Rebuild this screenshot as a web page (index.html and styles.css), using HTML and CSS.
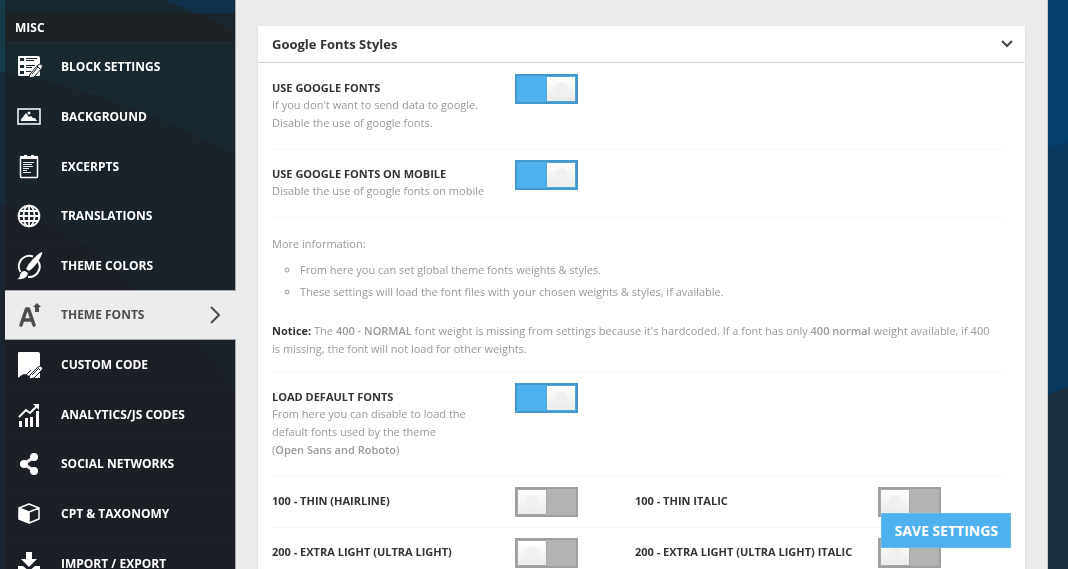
FILE: index.html
```html
<!DOCTYPE html>
<html lang="en">
<head>
  <meta charset="UTF-8">
  <meta name="viewport" content="width=device-width, initial-scale=1.0">
  <title>Theme Fonts</title>
  <link rel="stylesheet" href="styles.css">
</head>
<body>
  <svg class="backdrop" viewBox="0 0 1068 569" preserveAspectRatio="none" aria-hidden="true">
    <rect width="1068" height="569" fill="#005088"/>
    <path d="M0 0H163C190 10 215 20 240 34V569H0Z" fill="#163a48"/>
    <path d="M0 72C70 82 150 112 240 157V569H0Z" fill="#172b3b"/>
    <path d="M0 205C45 220 80 240 112 267L165 312C190 330 215 360 240 400V569H0Z" fill="#1c2530"/>
    <path d="M1040 0H1068V569H1040Z" fill="#03406c"/>
    <path d="M1040 149L1068 142V569H1040Z" fill="#083a61"/>
    <path d="M1040 398L1068 387V569H1040Z" fill="#1b2f3e"/>
  </svg>

  <div class="wrapper">
    <aside class="sidebar">
      <h2 class="menu-title">Misc</h2>
      <nav class="menu">
        <a href="#" class="menu-item">
          <svg class="icon" viewBox="0 0 24 24"><path fill="currentColor" fill-rule="evenodd" d="M2 1h19q2 0 2 2v17q0 1-1 1H2q-1 0-1-1V2q0-1 1-1zM3 3v3h4V3zM9 3v1h11V3zM9 5v1h8V5zM3 10v3h4v-3zM9 10v1h9v-1zM9 12v1h6v-1zM3 16v3h4v-3zM9 16v1h5v-1z"/><path class="pencil" d="M12 23l1-4 8-9q2-2 4 0 1 1 0 3l-8 9z"/><path class="pencil-line" d="M15 19l6-7M20 11l3 3"/></svg>
          <span>Block Settings</span>
        </a>
        <a href="#" class="menu-item">
          <svg class="icon" viewBox="0 0 24 24"><path d="M1 4h22v15H1z" fill="none" stroke="currentColor" stroke-width="1.500"/><path d="M4 16v-2l2-2 3-4 3 4 2-1 2 2h2l2 3zM12 6.500a1.500 1.500 0 1 1 0 3 1.500 1.500 0 0 1 0-3z" fill="currentColor"/></svg>
          <span>Background</span>
        </a>
        <a href="#" class="menu-item">
          <svg class="icon" viewBox="0 0 24 24"><rect x="3.500" y="2" width="17" height="20.500" rx="1" fill="none" stroke="currentColor" stroke-width="1.500"/><path d="M3 1h18v3H3zM7 0h3v2H7zM14 0h3v2h-3z" fill="currentColor"/><path d="M6 7.500h11M6 9.500h9M6 11.500h10M6 13.500h6M6 15.500h4M6 17.500h8" stroke="currentColor" stroke-width=".9"/></svg>
          <span>Excerpts</span>
        </a>
        <a href="#" class="menu-item">
          <svg class="icon" viewBox="0 0 24 24"><g fill="none" stroke="currentColor" stroke-width="1.800"><circle cx="12" cy="12" r="10.400"/><ellipse cx="12" cy="12" rx="5.500" ry="10.400"/><path d="M12 1.500v21M1.500 12h21M3.500 7h17M3.500 17h17"/></g></svg>
          <span>Translations</span>
        </a>
        <a href="#" class="menu-item">
          <svg class="icon tall" viewBox="0 0 24 28"><path d="M16 4.500A10.500 10.500 0 0 0 3.500 20M21 9A10.500 10.500 0 0 1 11 25" fill="none" stroke="currentColor" stroke-width="2"/><path d="M25 0q1 1-3 8-4 7-10 11l-3-2q2-5 7-10 6-6 9-7zM8 19l3 2q-1 7-11 6 3-1 3-4 1-4 5-4z" fill="currentColor"/></svg>
          <span>Theme Colors</span>
        </a>
        <a href="#" class="menu-item active">
          <svg class="icon" viewBox="0 0 24 24"><path d="M4 22L9.500 6h2L17 22M6 17h9" fill="none" stroke="currentColor" stroke-width="3.500" stroke-linecap="round" stroke-linejoin="round"/><path d="M20 0l4 4h-2v5h-4V4h-2z" fill="currentColor"/></svg>
          <span>Theme Fonts</span>
          <svg class="arrow" viewBox="0 0 10 18"><path d="M1 1l8 8-8 8" fill="none" stroke="currentColor" stroke-width="2"/></svg>
        </a>
        <a href="#" class="menu-item">
          <svg class="icon tall" viewBox="0 0 24 28"><path d="M2 1h19q2 0 2 2v24h-6l-7-3-3-1q-3 1-6 4V2q0-1 1-1z" fill="currentColor"/><path class="pencil-line" d="M9 24q-3-1-5 2M9 24l5-5"/><path class="pencil" d="M12 28l1-4 8-8q2-2 4 0 1 1 0 3l-8 8z"/><path class="pencil-line" d="M15 24l6-6M20 16l3 3"/></svg>
          <span>Custom Code</span>
        </a>
        <a href="#" class="menu-item">
          <svg class="icon" viewBox="0 0 24 24"><path d="M2 18h3v6H2zM8 15h3v9H8zM13 14h3v10h-3zM19 8h3v16h-3zM16 1h6v6l-2-2z" fill="currentColor"/><path d="M2 14l7-7 4 3 7-7" fill="none" stroke="currentColor" stroke-width="2"/></svg>
          <span>Analytics/JS Codes</span>
        </a>
        <a href="#" class="menu-item">
          <svg class="icon" viewBox="0 0 24 24"><path d="M17 5L7 12l10 7" fill="none" stroke="currentColor" stroke-width="3"/><g fill="currentColor"><circle cx="17" cy="5" r="4"/><circle cx="7" cy="12" r="4"/><circle cx="17" cy="19" r="4"/></g></svg>
          <span>Social Networks</span>
        </a>
        <a href="#" class="menu-item">
          <svg class="icon" viewBox="0 0 24 24"><path d="M12 2l10 4v11l-10 4-10-4V6zM2 6l10 4 10-4M12 10v11" fill="none" stroke="currentColor" stroke-width="1.500" stroke-linejoin="round"/><path d="M2 6l10 4v11L2 17z" fill="currentColor"/></svg>
          <span>CPT &amp; Taxonomy</span>
        </a>
        <a href="#" class="menu-item">
          <svg class="icon" viewBox="0 0 24 24"><path d="M9 0h6v7h5l-8 8-8-8h5zM1 14h5l6 5 6-5h5v8H1z" fill="currentColor"/></svg>
          <span>Import / Export</span>
        </a>
      </nav>
    </aside>

    <main class="content">
      <section class="panel">
        <header class="panel-header">
          <h3>Google Fonts Styles</h3>
          <button type="button" class="collapse" aria-label="Collapse">
            <svg viewBox="0 0 12 8"><path d="M1 1l5 5 5-5" fill="none" stroke="currentColor" stroke-width="2"/></svg>
          </button>
        </header>

        <form class="panel-body">
          <div class="row">
            <div class="field">
              <div class="field-text">
                <label for="google-fonts">Use Google Fonts</label>
                <p>If you don't want to send data to google. Disable the use of google fonts.</p>
              </div>
              <input type="checkbox" class="toggle" id="google-fonts" checked>
            </div>
          </div>

          <div class="row">
            <div class="field">
              <div class="field-text">
                <label for="google-mobile">Use Google Fonts on Mobile</label>
                <p>Disable the use of google fonts on mobile</p>
              </div>
              <input type="checkbox" class="toggle" id="google-mobile" checked>
            </div>
          </div>

          <div class="row info">
            <p>More information:</p>
            <ul>
              <li>From here you can set global theme fonts weights &amp; styles.</li>
              <li>These settings will load the font files with your chosen weights &amp; styles, if available.</li>
            </ul>
            <p><strong class="notice">Notice:</strong> The <strong>400 - NORMAL</strong> font weight is missing from settings because it's hardcoded. If a font has only <strong>400 normal</strong> weight available, if 400 is missing, the font will not load for other weights.</p>
          </div>

          <div class="row">
            <div class="field">
              <div class="field-text">
                <label for="default-fonts">Load Default Fonts</label>
                <p>From here you can disable to load the default fonts used by the theme<br>(<strong>Open Sans and Roboto</strong>)</p>
              </div>
              <input type="checkbox" class="toggle" id="default-fonts" checked>
            </div>
          </div>

          <div class="row compact">
            <div class="field">
              <div class="field-text"><label for="w100">100 - Thin (Hairline)</label></div>
              <input type="checkbox" class="toggle" id="w100">
            </div>
            <div class="field">
              <div class="field-text"><label for="w100i">100 - Thin Italic</label></div>
              <input type="checkbox" class="toggle" id="w100i">
            </div>
          </div>

          <div class="row compact">
            <div class="field">
              <div class="field-text"><label for="w200">200 - Extra Light (Ultra Light)</label></div>
              <input type="checkbox" class="toggle" id="w200">
            </div>
            <div class="field">
              <div class="field-text"><label for="w200i">200 - Extra Light (Ultra Light) Italic</label></div>
              <input type="checkbox" class="toggle" id="w200i">
            </div>
          </div>
        </form>
      </section>
    </main>
  </div>

  <button type="button" class="save">Save Settings</button>
</body>
</html>
```
FILE: styles.css
```css
* {
  box-sizing: border-box;
}

body {
  margin: 0;
  font-family: "Open Sans", "Noto Sans", sans-serif;
  font-size: 11px;
  line-height: 18px;
  color: #999;
  background: #1b2f3e;
}

h2,
h3,
p,
ul {
  margin: 0;
}

/* angled shapes behind the whole panel */
.backdrop {
  position: fixed;
  inset: 0;
  width: 100%;
  height: 100%;
  z-index: -1;
}

.wrapper {
  display: flex;
  height: 100vh;
  overflow: hidden;
  margin: 0 20px 0 5px;
}

/* sidebar */
.sidebar {
  flex: 0 0 231px;
  padding-top: 13px;
  background: rgba(28, 28, 32, 0.6);
  border-right: 1px solid #a5a9ac;
}

.menu-title {
  height: 29px;
  padding-left: 10px;
  background: rgba(32, 32, 32, 0.6);
  color: #fff;
  font-size: 12px;
  line-height: 29px;
  text-transform: uppercase;
}

.menu {
  display: grid;
  grid-auto-rows: 1fr;
  min-height: 546px;
}

.menu-item {
  display: flex;
  align-items: center;
  gap: 20px;
  padding: 0 16px 0 12px;
  border-top: 1px solid rgba(255, 255, 255, 0.02);
  color: #fff;
  font-size: 12px;
  font-weight: 700;
  text-decoration: none;
  text-transform: uppercase;
}

.menu-item.active {
  margin-right: -1px;
  background: #ececec;
  border-top: 1px solid #a5a9ac;
  border-bottom: 1px solid #a5a9ac;
  color: #4d4d4d;
}

.icon {
  flex: none;
  width: 24px;
  height: 24px;
  overflow: visible;
}

.icon.tall {
  height: 28px;
}

.pencil {
  fill: #fff;
  stroke: #1b242c;
  stroke-width: 1px;
}

.pencil-line {
  fill: none;
  stroke: #1b242c;
  stroke-width: 1px;
}

.arrow {
  width: 10px;
  height: 18px;
  margin-left: auto;
}

/* content */
.content {
  flex: 1;
  padding: 26px 22px 0;
  background: #ececec;
  border-right: 1px solid #c3cbd0;
}

.panel-header {
  display: flex;
  align-items: center;
  justify-content: space-between;
  height: 36px;
  padding: 0 12px 0 14px;
  background: #fff;
  box-shadow: 0 1px 2px rgba(0, 0, 0, 0.12);
}

.panel-header h3 {
  color: #333;
  font-size: 13px;
}

.collapse {
  display: flex;
  padding: 0;
  border: 0;
  background: none;
  color: #444;
  cursor: pointer;
}

.collapse svg {
  width: 12px;
  height: 8px;
}

.panel-body {
  margin-top: 1px;
  padding: 1px 20px 20px 14px;
  background: #fff;
  box-shadow: 0 1px 2px rgba(0, 0, 0, 0.12);
}

.row {
  display: flex;
  padding: 10px 0 17px;
  border-bottom: 1px solid #f7f7f7;
}

.row.compact {
  padding-bottom: 10px;
}

.field {
  flex: 0 0 363px;
  display: flex;
  align-items: flex-start;
}

.field-text {
  flex: 0 0 243px;
  padding: 5px 25px 0 0;
}

.field label {
  display: block;
  color: #333;
  font-weight: 700;
  line-height: 17px;
  text-transform: uppercase;
  white-space: nowrap;
}

.row.info {
  display: block;
  padding: 17px 12px 14px 0;
}

.info ul {
  padding: 8px 0 17px 28px;
  list-style: circle;
}

.info li {
  margin-bottom: 4px;
}

strong {
  font-weight: 600;
}

.notice {
  color: #333;
  font-weight: 700;
}

/* switches */
.toggle {
  appearance: none;
  display: flex;
  width: 63px;
  height: 30px;
  margin: 0;
  padding: 1px;
  background: #b3b3b3;
  border: 2px solid #9f9f9f;
  cursor: pointer;
}

.toggle::before {
  content: "";
  width: 28px;
  height: 24px;
  background: radial-gradient(circle, #f0f0f0 0 6px, transparent 7px), linear-gradient(#fff, #ebebeb);
  box-shadow: 0 0 1px #777;
}

.toggle:checked {
  justify-content: flex-end;
  background: #4eb1ed;
  border-color: #4398cb;
}

.save {
  position: fixed;
  right: 57px;
  bottom: 21px;
  height: 35px;
  padding: 0 12px;
  border: 1px solid #64bcef;
  background: #4eb1ed;
  color: #fff;
  font-family: inherit;
  font-size: 14px;
  font-weight: 700;
  text-transform: uppercase;
  cursor: pointer;
}
```
